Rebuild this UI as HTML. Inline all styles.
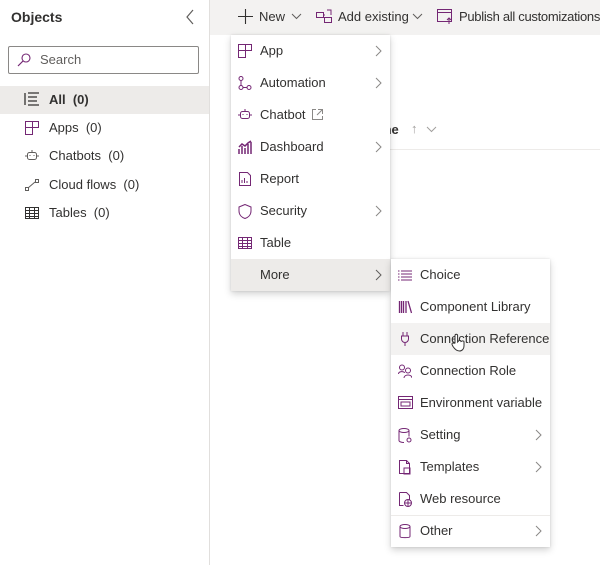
<!DOCTYPE html>
<html><head><meta charset="utf-8"><style>
*{box-sizing:border-box;margin:0;padding:0}
body{width:600px;height:565px;overflow:hidden;background:#fff;font-family:"Liberation Sans",sans-serif;font-size:13px;color:#323130;position:relative;white-space:nowrap}
.abs{position:absolute}
.side{left:0;top:0;width:210px;height:565px;border-right:1px solid #e1dfdd}
.row{position:absolute;left:0;width:209px;height:28px;line-height:28px;padding-left:49px}
.mi{position:absolute;left:0;width:159px;height:32px;line-height:32px;padding-left:29px}
.mi svg.ic{position:absolute;left:7px;top:9px}
.mi svg.chev{position:absolute;left:auto;right:8px;top:10px}
.bar{left:210px;top:0;width:390px;height:35px;background:#f3f2f1}
.menu{background:#fff;box-shadow:0 3px 7px rgba(0,0,0,.18),0 0 2px rgba(0,0,0,.12)}
</style></head><body>
<div class="abs side">
 <div class="abs" style="left:11px;top:9px;font-size:14px;font-weight:bold">Objects</div>
 <svg class="abs" style="left:185px;top:9px" width="10" height="16"><path d="M8 1L2 8l6 7" fill="none" stroke="#605e5c" stroke-width="1.2"/></svg>
 <div class="abs" style="left:8px;top:46px;width:191px;height:28px;border:1px solid #8a8886;border-radius:2px;line-height:26px;padding-left:31px;color:#605e5c">Search</div>
 <svg class="abs" style="left:17px;top:53px" width="14" height="14"><circle cx="9" cy="5" r="4" fill="none" stroke="#742774" stroke-width="1.1"/><path d="M6 8L1 13" stroke="#742774" stroke-width="1.2"/></svg>
 <div class="row" style="top:86px;background:#edebe9;font-weight:bold">All&nbsp; (0)</div>
 <svg class="abs" style="left:24px;top:92px" width="16" height="14"><path d="M1 1v12M4 1h11M4 5h9M4 9h9M4 13h11" stroke="#323130" stroke-width="1.3" fill="none"/></svg>
 <div class="row" style="top:114px">Apps&nbsp; (0)</div>
 <svg class="abs" style="left:25px;top:121px" width="14" height="14"><path d="M.5.5h13v6h-6v7h-7zM7.5.5v6M.5 6.5h7" fill="none" stroke="#742774"/></svg>
 <div class="row" style="top:142px">Chatbots&nbsp; (0)</div>
 <svg class="abs" style="left:25px;top:149px" width="14" height="14"><rect x="2.5" y="3.5" width="9" height="7" rx="2" fill="none" stroke="#605e5c"/><path d="M7 1v2M0 7h2M12 7h2M5 6v1M9 6v1" stroke="#605e5c"/></svg>
 <div class="row" style="top:171px">Cloud flows&nbsp; (0)</div>
 <svg class="abs" style="left:25px;top:178px" width="14" height="14"><rect x=".5" y="9.5" width="3" height="3" fill="none" stroke="#605e5c"/><rect x="10.5" y="1.5" width="3" height="3" fill="none" stroke="#605e5c"/><path d="M3 10L10 4" stroke="#605e5c"/></svg>
 <div class="row" style="top:199px">Tables&nbsp; (0)</div>
 <svg class="abs" style="left:25px;top:206px" width="14" height="14"><path d="M.5 1.5h13v11H.5zM.5 4.5h13M.5 7.5h13M.5 10.5h13M4.5 1.5v11M9.5 1.5v11" fill="none" stroke="#323130"/></svg>
</div>
<div class="abs bar">
 <svg class="abs" style="left:28px;top:9px" width="15" height="15"><path d="M7.5 0v15M0 7.5h15" stroke="#323130" stroke-width="1.1"/></svg>
 <div class="abs" style="left:49px;top:9px">New</div>
 <svg class="abs" style="left:81px;top:13px" width="11" height="7"><path d="M1 1l4.5 4.5L10 1" fill="none" stroke="#605e5c"/></svg>
 <svg class="abs" style="left:106px;top:9px" width="16" height="14"><path d="M.5 3.5h7v5h-7zM7 6h2M8.5 8.5h7v5h-7zM11 1h4v5" fill="none" stroke="#742774"/></svg>
 <div class="abs" style="left:128px;top:9px">Add existing</div>
 <svg class="abs" style="left:202px;top:13px" width="11" height="7"><path d="M1 1l4.5 4.5L10 1" fill="none" stroke="#605e5c"/></svg>
 <svg class="abs" style="left:227px;top:9px" width="16" height="15"><path d="M.5.5h14v12H.5zM.5 3.5h14M12 9v6M10 11l2-2 2 2" fill="none" stroke="#742774"/></svg>
 <div class="abs" style="left:249px;top:9px;letter-spacing:-0.3px">Publish all customizations</div>
</div>
<div class="abs" style="left:380px;top:122px;font-weight:bold">me</div>
<div class="abs" style="left:411px;top:121px;color:#a19f9d">↑</div>
<svg class="abs" style="left:426px;top:126px" width="11" height="7"><path d="M1 1l4.5 4.5L10 1" fill="none" stroke="#a19f9d"/></svg>
<div class="abs" style="left:390px;top:149px;width:210px;height:1px;background:#edebe9"></div>

<div class="abs menu" style="left:231px;top:35px;width:159px;height:256px">
 <div class="mi" style="top:0">App<svg class="ic" width="14" height="14"><path d="M.5.5h13v6h-6v7h-7zM7.5.5v6M.5 6.5h7" fill="none" stroke="#742774"/></svg><svg class="chev" width="7" height="12"><path d="M1 1l5 5-5 5" fill="none" stroke="#8a8886"/></svg></div>
 <div class="mi" style="top:32px">Automation<svg class="ic" width="14" height="14"><circle cx="3" cy="2.5" r="2" fill="none" stroke="#742774"/><circle cx="3" cy="11.5" r="2" fill="none" stroke="#742774"/><circle cx="11" cy="11.5" r="2" fill="none" stroke="#742774"/><path d="M3 4.5v5M5 11.5h4" stroke="#742774"/></svg><svg class="chev" width="7" height="12"><path d="M1 1l5 5-5 5" fill="none" stroke="#8a8886"/></svg></div>
 <div class="mi" style="top:64px">Chatbot <svg style="vertical-align:-1px;margin-left:3px" width="11" height="11"><path d="M4 .5H.5v10h10V7M6 .5h4.5V5M10.5.5L5 6" fill="none" stroke="#8a8886"/></svg><svg class="ic" width="14" height="14"><rect x="2.5" y="3.5" width="9" height="7" rx="2" fill="none" stroke="#742774"/><path d="M7 1v2M0 7h2M12 7h2M5 6v1M9 6v1" stroke="#742774"/></svg></div>
 <div class="mi" style="top:96px">Dashboard<svg class="ic" width="14" height="14"><path d="M1 9v5M4 6v8M7 8v6M10 4v10M13 2v12M1 7l3-3 3 2 3-3 3-2" fill="none" stroke="#742774" stroke-width="1.5"/></svg><svg class="chev" width="7" height="12"><path d="M1 1l5 5-5 5" fill="none" stroke="#8a8886"/></svg></div>
 <div class="mi" style="top:128px">Report<svg class="ic" width="14" height="14"><path d="M1.5.5h8l3 3v10h-11zM4 11V8M6.5 11V6M9 11V9" fill="none" stroke="#742774"/></svg></div>
 <div class="mi" style="top:160px">Security<svg class="ic" width="14" height="15"><path d="M7 .5L1 3v4c0 4 3 6.5 6 7.5 3-1 6-3.5 6-7.5V3z" fill="none" stroke="#742774"/></svg><svg class="chev" width="7" height="12"><path d="M1 1l5 5-5 5" fill="none" stroke="#8a8886"/></svg></div>
 <div class="mi" style="top:192px">Table<svg class="ic" width="14" height="14"><path d="M.5 1.5h13v11H.5zM.5 4.5h13M.5 7.5h13M.5 10.5h13M4.5 1.5v11M9.5 1.5v11" fill="none" stroke="#742774"/></svg></div>
 <div class="mi" style="top:224px;background:#edebe9">More<svg class="chev" width="7" height="12"><path d="M1 1l5 5-5 5" fill="none" stroke="#605e5c"/></svg></div>
</div>

<div class="abs menu" style="left:391px;top:259px;width:159px;height:288px">
 <div class="mi" style="top:0">Choice<svg class="ic" width="14" height="14"><path d="M0 3h1.5M0 6h1.5M0 9h1.5M0 12h1.5M3 3h11M3 6h11M3 9h11M3 12h11" stroke="#742774"/></svg></div>
 <div class="mi" style="top:32px">Component Library<svg class="ic" width="14" height="14"><path d="M1.5 1v12M3.5 1v12M5.5 1v12M8 1v12M10 1l3.5 12" stroke="#742774" stroke-width="1.3"/></svg></div>
 <div class="mi" style="top:64px;background:#f3f2f1">Connection Reference<svg class="ic" width="14" height="14"><path d="M5 0v4M9 0v4M3.5 4h7v3a3.5 3.5 0 0 1-7 0zM7 10v4" fill="none" stroke="#742774"/></svg></div>
 <div class="mi" style="top:96px">Connection Role<svg class="ic" width="14" height="14"><circle cx="4" cy="3.5" r="2.5" fill="none" stroke="#742774"/><circle cx="10" cy="6.5" r="2.5" fill="none" stroke="#742774"/><path d="M.5 10c0-3 6-3 6-1M6 14c0-4 8-4 8 0" fill="none" stroke="#742774"/></svg></div>
 <div class="mi" style="top:128px">Environment variable<svg class="ic" width="15" height="13"><path d="M.5.5h14v12H.5zM.5 3.5h14M3 6h9v4H3z" fill="none" stroke="#742774"/></svg></div>
 <div class="mi" style="top:160px">Setting<svg class="ic" width="14" height="15"><ellipse cx="6" cy="2.5" rx="5" ry="2" fill="none" stroke="#742774"/><path d="M1 2.5v10c0 1 2 2 5 2M11 2.5v6" fill="none" stroke="#742774"/><circle cx="11" cy="12" r="2" fill="none" stroke="#742774"/></svg><svg class="chev" width="7" height="12"><path d="M1 1l5 5-5 5" fill="none" stroke="#8a8886"/></svg></div>
 <div class="mi" style="top:192px">Templates<svg class="ic" width="14" height="15"><path d="M1.5.5h7l3 3v10h-10zM8.5.5v3h3M6 8h6v6H6z" fill="none" stroke="#742774"/></svg><svg class="chev" width="7" height="12"><path d="M1 1l5 5-5 5" fill="none" stroke="#8a8886"/></svg></div>
 <div class="mi" style="top:224px">Web resource<svg class="ic" width="14" height="15"><path d="M1.5.5h7l3 3v4M1.5.5v13h4" fill="none" stroke="#742774"/><circle cx="10" cy="11" r="3.5" fill="none" stroke="#742774"/><path d="M6.5 11h7M10 7.5v7" stroke="#742774"/></svg></div>
 <div class="abs" style="left:0;top:256px;width:159px;height:1px;background:#edebe9"></div>
 <div class="mi" style="top:256px">Other<svg class="ic" width="14" height="15"><ellipse cx="7" cy="2.5" rx="5" ry="2" fill="none" stroke="#742774"/><path d="M2 2.5v10c0 1.5 10 1.5 10 0v-10" fill="none" stroke="#742774"/></svg><svg class="chev" width="7" height="12"><path d="M1 1l5 5-5 5" fill="none" stroke="#8a8886"/></svg></div>
</div>
<svg class="abs" style="left:451px;top:333px" width="16" height="20"><path d="M4 10V2.5a1.3 1.3 0 0 1 2.6 0V9l1-1a1.3 1.3 0 0 1 2.4.5l.8-.3a1.3 1.3 0 0 1 2.2.8v4c0 3-2 5-4.5 5S4 16.5 2 13.5L1 11.5a1.2 1.2 0 0 1 2-1.2z" fill="#fff" stroke="#323130"/></svg>
</body></html>
